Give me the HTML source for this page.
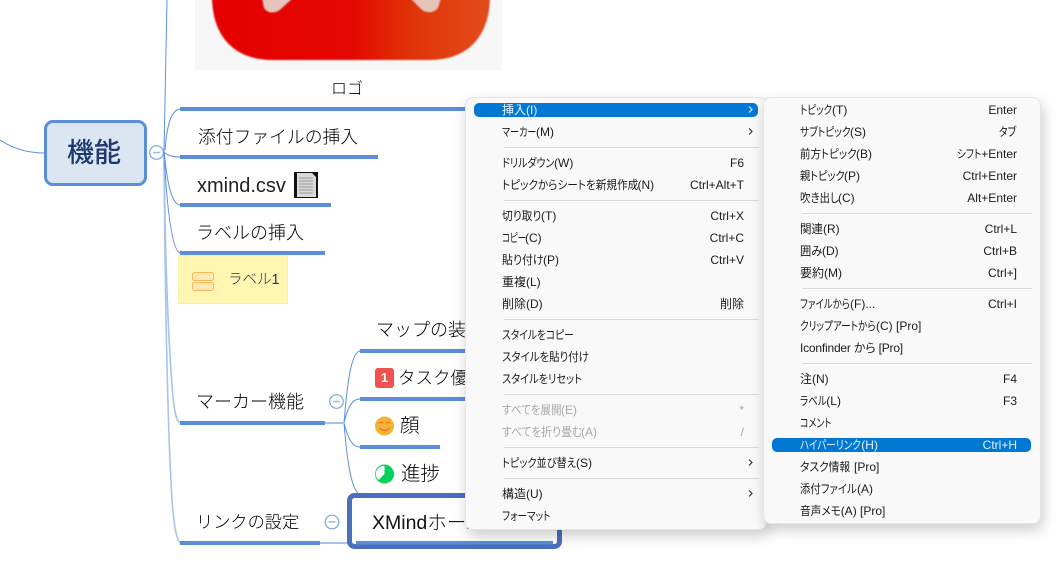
<!DOCTYPE html>
<html lang="ja"><head><meta charset="utf-8"><style>
html,body{margin:0;padding:0;background:#fff}
body{position:relative;width:1057px;height:565px;overflow:hidden;font-family:"Liberation Sans","Noto Sans CJK JP",sans-serif}
.t{position:absolute;white-space:nowrap;color:#000;line-height:24px;height:24px;font-weight:300}
.menu{position:absolute;background:#f9f9f9;border:1px solid #e6e6e6;border-radius:8px;box-shadow:2px 6px 14px rgba(0,0,0,.2);box-sizing:border-box}
.r{position:absolute;font-size:12px;line-height:16px;height:16px;white-space:nowrap;color:#1a1a1a;font-feature-settings:"palt"}
.k{position:absolute;font-size:12px;line-height:16px;height:16px;white-space:nowrap;color:#1a1a1a;text-align:right;font-feature-settings:"palt"}
.c{display:inline-block;transform-origin:0 50%;white-space:nowrap;text-align:left}
.s{position:absolute;height:1px;background:#d9d9d9}
.h{position:absolute;background:#0078d4;border-radius:5px;height:14px}
.g{color:#a8a8a8}.w{color:#e8f2fb}
svg{position:absolute;left:0;top:0}
</style></head><body>
<svg width="1057" height="565" viewBox="0 0 1057 565">
<defs><linearGradient id="rd" gradientUnits="userSpaceOnUse" x1="212" y1="0" x2="490" y2="0"><stop offset="0" stop-color="#e40000"/><stop offset=".5" stop-color="#e30800"/><stop offset=".72" stop-color="#e03408"/><stop offset="1" stop-color="#e24c1a"/></linearGradient>
<filter id="bl" color-interpolation-filters="sRGB"><feGaussianBlur stdDeviation="0.8"/></filter></defs>
<rect x="195" y="0" width="307" height="70" fill="#f7f7f7"/>
<path d="M212 -4C212 38 236 60 272 60H430C466 60 490 38 490 -4Z" fill="url(#rd)" filter="url(#bl)"/>
<path d="M262 -2H293L282 8C276 14 268 14 264 8Z" fill="#e6c4bc" filter="url(#bl)"/>
<path d="M410 -2H441L438 8C433 14 425 13 421 9Z" fill="#e6c4bc" filter="url(#bl)"/>
<g fill="none" stroke="#5b90dc" stroke-width="1">
<path d="M0 140C12 148 26 153 45 153"/>
<path d="M167 0C166 60 165 110 164 152"/>
<path d="M164 152C165 240 167 320 172 385C174 412 176 420 180 423" stroke="#a8c4ec" stroke-width="1.6"/>
<path d="M164 152C165 280 167 420 172 500C174 525 176 538 180 543" stroke="#a8c4ec" stroke-width="1.6"/>
<path d="M165 150C167 125 171 110 180 109"/>
<path d="M164 152C167 155 172 157 180 157"/>
<path d="M164 152C167 180 171 204 180 205"/>
<path d="M164 152C167 210 172 250 180 253"/>
<path d="M344 423C347 385 351 352 360 351"/>
<path d="M344 423C347 410 351 399 360 399"/>
<path d="M344 423C347 435 351 447 360 447"/>
<path d="M344 423C347 460 351 490 360 495"/>
<path d="M325 423H345" stroke="#a8c4ec" stroke-width="2"/>
<path d="M320 543H348" stroke="#a8c4ec" stroke-width="2"/>
</g>
<g fill="#5a8ed8">
<rect x="180" y="107" width="285" height="4"/>
<rect x="180" y="155" width="198" height="4"/>
<rect x="180" y="203" width="151" height="4"/>
<rect x="180" y="251" width="145" height="4"/>
<rect x="180" y="421" width="145" height="4"/>
<rect x="180" y="541" width="140" height="4"/>
<rect x="360" y="349" width="110" height="4"/>
<rect x="360" y="397" width="110" height="4"/>
<rect x="360" y="445" width="80" height="4"/>
</g>
<rect x="349.500" y="495.500" width="210" height="51" rx="5" fill="#fff" stroke="#4a6fbc" stroke-width="5"/>
<rect x="356" y="541" width="197" height="3.500" fill="#5a8ed8"/>
<g fill="#fff" stroke="#7ba6e2" stroke-width="1.200">
<circle cx="156.500" cy="152.500" r="6.800"/><circle cx="336.500" cy="401.500" r="6.800"/><circle cx="332" cy="522" r="6.800"/>
</g>
<g stroke="#a9b8cc" stroke-width="1.600"><path d="M153 152.500h7M333 401.500h7M328.500 522h7"/></g>
<rect x="178.500" y="255.500" width="109" height="48" fill="#fff6b2" stroke="#fdeea6"/>
<rect x="192.500" y="272.500" width="21" height="8" rx="2" fill="#ffe9b8" stroke="#fbb755"/>
<rect x="192.500" y="282.500" width="21" height="8" rx="2" fill="#ffe9b8" stroke="#fbb755"/>
<rect x="294" y="172" width="24" height="26" fill="#111"/>
<path d="M297 173H312L316 177V197H297Z" fill="#d8d8d8"/>
<path d="M299 178h14M299 181h14M299 184h14M299 187h14M299 190h14M299 193h14" stroke="#9b9b9b" stroke-width="1"/>
<rect x="375" y="368" width="19" height="20" rx="3" fill="#f0524f"/>
<circle cx="384.500" cy="426" r="9.500" fill="#f5b335"/>
<path d="M379 423.500q2-2.500 4 0M386 423.500q2-2.500 4 0M379.500 428q5 5 10 0" fill="none" stroke="#e0662a" stroke-width="1"/>
<circle cx="384.500" cy="474" r="9.500" fill="#06d05c"/>
<path d="M384.500 466V474L378.500 480A8 8 0 0 1 384.500 466Z" fill="#fff"/>
</svg>

<div style="position:absolute;left:44px;top:120px;width:103px;height:66px;box-sizing:border-box;border:3px solid #5a8ed8;border-radius:9px;background:#dce6f3"></div>
<div class="t" style="left:67px;top:139px;font-size:27px;line-height:28px;height:28px;color:#1d3a6e;font-weight:500">機能</div>
<div class="t" style="left:331px;top:78px;font-size:16px">ロゴ</div>
<div class="t" style="left:198px;top:125px;font-size:17.800px">添付ファイルの挿入</div>
<div class="t" style="left:197px;top:174px;font-size:20px;color:#222">xmind.csv</div>
<div class="t" style="left:196px;top:221px;font-size:18px">ラベルの挿入</div>
<div class="t" style="left:228px;top:268px;font-size:14.500px;color:#26324f">ラベル1</div>
<div class="t" style="left:196px;top:390px;font-size:18px">マーカー機能</div>
<div class="t" style="left:196px;top:510px;font-size:17.200px">リンクの設定</div>
<div class="t" style="left:376px;top:318px;font-size:18px">マップの装飾</div>
<div class="t" style="left:379px;top:366px;font-size:13px;font-weight:700;color:#fff;width:11px;text-align:center">1</div>
<div class="t" style="left:398px;top:366px;font-size:17.500px">タスク優先</div>
<div class="t" style="left:400px;top:414px;font-size:19.500px">顔</div>
<div class="t" style="left:401px;top:462px;font-size:19.500px">進捗</div>
<div class="t" style="left:372px;top:511px;font-size:19.500px;color:#111">XMindホーム</div>

<div class="menu" style="left:465px;top:97px;width:302px;height:433px"></div>
<div class="h" style="left:474px;top:103px;width:284px"></div>
<div class="r w" style="left:502px;top:102px">挿入(I)</div>
<div class="r" style="left:502px;top:124px"><span class="c" style="width:34px;transform:scaleX(.755)">マーカー</span>(M)</div>
<div class="r" style="left:502px;top:155px"><span class="c" style="width:52px;transform:scaleX(.83)">ドリルダウン</span>(W)</div>
<div class="r" style="left:502px;top:177px"><span class="c" style="width:135.500px;transform:scaleX(.885)">トピックからシートを新規作成</span>(N)</div>
<div class="r" style="left:502px;top:208px"><span class="c" style="width:39px;transform:scaleX(.895)">切り取り</span>(T)</div>
<div class="r" style="left:502px;top:230px"><span class="c" style="width:23px;transform:scaleX(.7)">コピー</span>(C)</div>
<div class="r" style="left:502px;top:252px"><span class="c" style="width:41px;transform:scaleX(.91)">貼り付け</span>(P)</div>
<div class="r" style="left:502px;top:274px">重複(L)</div>
<div class="r" style="left:502px;top:296px">削除(D)</div>
<div class="r" style="left:502px;top:327px"><span class="c" style="width:71px;transform:scaleX(.81)">スタイルをコピー</span></div>
<div class="r" style="left:502px;top:349px"><span class="c" style="width:87px;transform:scaleX(.87)">スタイルを貼り付け</span></div>
<div class="r" style="left:502px;top:371px"><span class="c" style="width:80px;transform:scaleX(.85)">スタイルをリセット</span></div>
<div class="r g" style="left:502px;top:402px"><span class="c" style="width:59px;transform:scaleX(.88)">すべてを展開</span>(E)</div>
<div class="r g" style="left:502px;top:424px"><span class="c" style="width:79px;transform:scaleX(.9)">すべてを折り畳む</span>(A)</div>
<div class="r" style="left:502px;top:455px"><span class="c" style="width:74px;transform:scaleX(.85)">トピック並び替え</span>(S)</div>
<div class="r" style="left:502px;top:486px">構造(U)</div>
<div class="r" style="left:502px;top:508px"><span class="c" style="width:49px;transform:scaleX(.8)">フォーマット</span></div>
<div class="k" style="right:313px;top:155px">F6</div>
<div class="k" style="right:313px;top:177px">Ctrl+Alt+T</div>
<div class="k" style="right:313px;top:208px">Ctrl+X</div>
<div class="k" style="right:313px;top:230px">Ctrl+C</div>
<div class="k" style="right:313px;top:252px">Ctrl+V</div>
<div class="k" style="right:313px;top:296px">削除</div>
<div class="k g" style="right:313px;top:402px">*</div>
<div class="k g" style="right:313px;top:424px">/</div>
<div class="s" style="left:504px;top:147px;width:255px"></div>
<div class="s" style="left:504px;top:200px;width:255px"></div>
<div class="s" style="left:504px;top:319px;width:255px"></div>
<div class="s" style="left:504px;top:394px;width:255px"></div>
<div class="s" style="left:504px;top:447px;width:255px"></div>
<div class="s" style="left:504px;top:478px;width:255px"></div>
<svg width="1057" height="565" viewBox="0 0 1057 565" style="pointer-events:none">
<path d="M749 106.500l3 3-3 3" fill="none" stroke="#d0e4f6" stroke-width="1.200"/>
<path d="M749 128.500l3 3-3 3M749 459.500l3 3-3 3M749 490.500l3 3-3 3" fill="none" stroke="#333" stroke-width="1.200"/>
</svg>

<div class="menu" style="left:763px;top:97px;width:278px;height:427px"></div>
<div class="h" style="left:772px;top:438px;width:259px"></div>
<div class="r" style="left:800px;top:102px"><span class="c" style="width:32px;transform:scaleX(.79)">トピック</span>(T)</div>
<div class="r" style="left:800px;top:124px"><span class="c" style="width:50px;transform:scaleX(.81)">サブトピック</span>(S)</div>
<div class="r" style="left:800px;top:146px"><span class="c" style="width:56px;transform:scaleX(.875)">前方トピック</span>(B)</div>
<div class="r" style="left:800px;top:168px"><span class="c" style="width:44px;transform:scaleX(.85)">親トピック</span>(P)</div>
<div class="r" style="left:800px;top:190px"><span class="c" style="width:38px;transform:scaleX(.87)">吹き出し</span>(C)</div>
<div class="r" style="left:800px;top:221px"><span class="c" style="width:23px;transform:scaleX(.96)">関連</span>(R)</div>
<div class="r" style="left:800px;top:243px"><span class="c" style="width:22px;transform:scaleX(.94)">囲み</span>(D)</div>
<div class="r" style="left:800px;top:265px">要約(M)</div>
<div class="r" style="left:800px;top:296px"><span class="c" style="width:50px;transform:scaleX(.785)">ファイルから</span>(F)...</div>
<div class="r" style="left:800px;top:318px"><span class="c" style="width:76px;transform:scaleX(.8)">クリップアートから</span>(C) [Pro]</div>
<div class="r" style="left:800px;top:340px;letter-spacing:-.2px">Iconfinder から [Pro]</div>
<div class="r" style="left:800px;top:371px">注(N)</div>
<div class="r" style="left:800px;top:393px"><span class="c" style="width:26.300px;transform:scaleX(.79)">ラベル</span>(L)</div>
<div class="r" style="left:800px;top:415px"><span class="c" style="width:33px;transform:scaleX(.75)">コメント</span></div>
<div class="r w" style="left:800px;top:437px"><span class="c" style="width:61.300px;transform:scaleX(.8)">ハイパーリンク</span>(H)</div>
<div class="r" style="left:800px;top:459px"><span class="c" style="width:50.700px;transform:scaleX(.895)">タスク情報</span> [Pro]</div>
<div class="r" style="left:800px;top:481px"><span class="c" style="width:57px;transform:scaleX(.865)">添付ファイル</span>(A)</div>
<div class="r" style="left:800px;top:503px"><span class="c" style="width:40.700px;transform:scaleX(.89)">音声メモ</span>(A) [Pro]</div>
<div class="k" style="right:40px;top:102px">Enter</div>
<div class="k" style="right:40px;top:124px"><span class="c" style="width:18px;transform:scaleX(.82)">タブ</span></div>
<div class="k" style="right:40px;top:146px"><span class="c" style="width:24px;transform:scaleX(.8)">シフト</span>+Enter</div>
<div class="k" style="right:40px;top:168px">Ctrl+Enter</div>
<div class="k" style="right:40px;top:190px">Alt+Enter</div>
<div class="k" style="right:40px;top:221px">Ctrl+L</div>
<div class="k" style="right:40px;top:243px">Ctrl+B</div>
<div class="k" style="right:40px;top:265px">Ctrl+]</div>
<div class="k" style="right:40px;top:296px">Ctrl+I</div>
<div class="k" style="right:40px;top:371px">F4</div>
<div class="k" style="right:40px;top:393px">F3</div>
<div class="k w" style="right:40px;top:437px">Ctrl+H</div>
<div class="s" style="left:802px;top:213px;width:230px"></div>
<div class="s" style="left:802px;top:288px;width:230px"></div>
<div class="s" style="left:802px;top:363px;width:230px"></div>
</body></html>
